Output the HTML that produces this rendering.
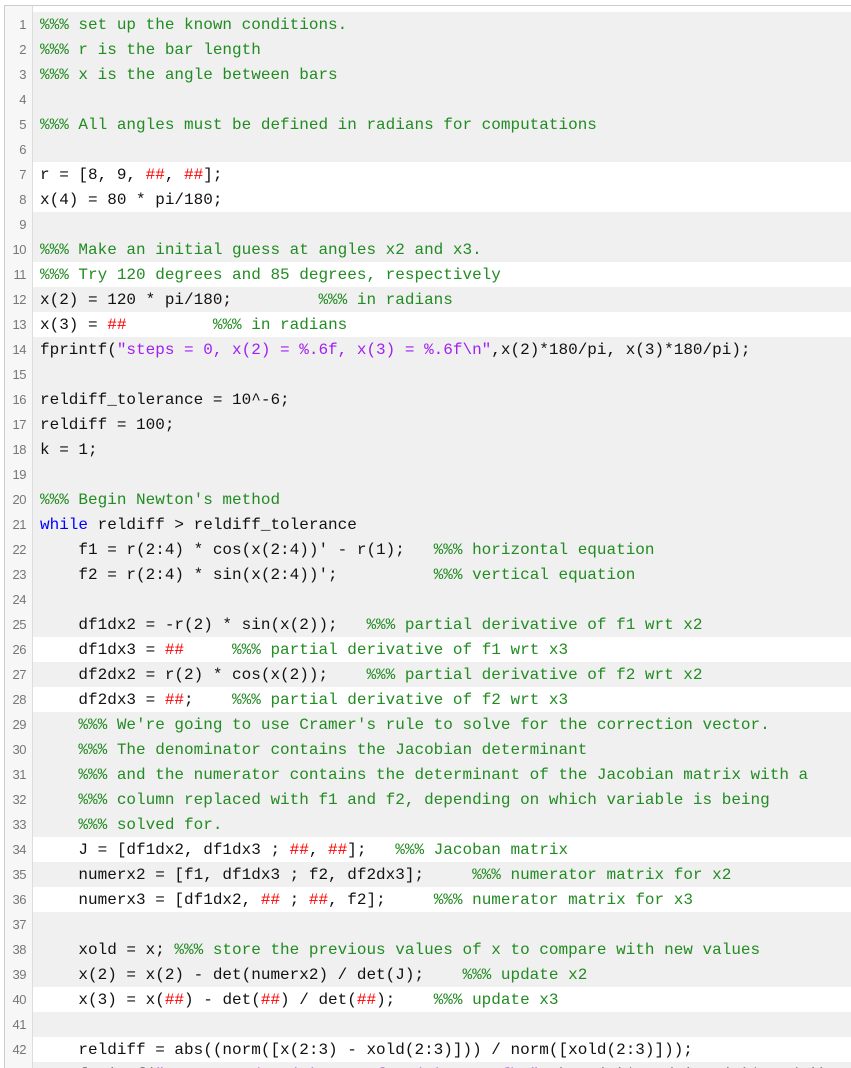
<!DOCTYPE html>
<html><head><meta charset="utf-8"><style>
html,body{margin:0;padding:0;background:#fff;width:851px;height:1068px;overflow:hidden;position:relative}
.wrap{position:absolute;left:4px;top:5px;width:847px;height:1063px;border-left:1px solid #ccc;border-top:1px solid #ccc;}
.gut{position:absolute;left:5px;top:6px;width:27px;height:1062px;background:#f7f7f7;border-right:1px solid #ddd}
.rows{position:absolute;left:0;top:12px;width:851px;height:1056px;overflow:hidden}
.r{position:relative;height:25px;line-height:26px;background:#f0f0f0;margin-left:33px;white-space:pre;font-family:"Liberation Mono",monospace;font-size:16px;color:#111;padding-left:7px}
.r.w{background:#fff}
.n{position:absolute;left:-33px;width:26px;text-align:right;font-family:"Liberation Sans",sans-serif;font-size:13px;color:#777;letter-spacing:-0.5px}
.c{color:#228b22}.k{color:#0000ff}.s{color:#a020f0}.h{color:#ff0000}
</style></head><body>
<div class="wrap"></div><div class="gut"></div>
<div class="rows">
<div class="r"><span class="n">1</span><span class="c">%%% set up the known conditions.</span></div>
<div class="r"><span class="n">2</span><span class="c">%%% r is the bar length</span></div>
<div class="r"><span class="n">3</span><span class="c">%%% x is the angle between bars</span></div>
<div class="r"><span class="n">4</span></div>
<div class="r"><span class="n">5</span><span class="c">%%% All angles must be defined in radians for computations</span></div>
<div class="r"><span class="n">6</span></div>
<div class="r w"><span class="n">7</span>r = [8, 9, <span class="h">##</span>, <span class="h">##</span>];</div>
<div class="r w"><span class="n">8</span>x(4) = 80 * pi/180;</div>
<div class="r"><span class="n">9</span></div>
<div class="r"><span class="n">10</span><span class="c">%%% Make an initial guess at angles x2 and x3.</span></div>
<div class="r w"><span class="n">11</span><span class="c">%%% Try 120 degrees and 85 degrees, respectively</span></div>
<div class="r"><span class="n">12</span>x(2) = 120 * pi/180;         <span class="c">%%% in radians</span></div>
<div class="r w"><span class="n">13</span>x(3) = <span class="h">##</span>         <span class="c">%%% in radians</span></div>
<div class="r"><span class="n">14</span>fprintf(<span class="s">"steps = 0, x(2) = %.6f, x(3) = %.6f\n"</span>,x(2)*180/pi, x(3)*180/pi);</div>
<div class="r"><span class="n">15</span></div>
<div class="r"><span class="n">16</span>reldiff_tolerance = 10^-6;</div>
<div class="r"><span class="n">17</span>reldiff = 100;</div>
<div class="r"><span class="n">18</span>k = 1;</div>
<div class="r"><span class="n">19</span></div>
<div class="r"><span class="n">20</span><span class="c">%%% Begin Newton's method</span></div>
<div class="r"><span class="n">21</span><span class="k">while</span> reldiff &gt; reldiff_tolerance</div>
<div class="r"><span class="n">22</span>    f1 = r(2:4) * cos(x(2:4))' - r(1);   <span class="c">%%% horizontal equation</span></div>
<div class="r"><span class="n">23</span>    f2 = r(2:4) * sin(x(2:4))';          <span class="c">%%% vertical equation</span></div>
<div class="r"><span class="n">24</span></div>
<div class="r"><span class="n">25</span>    df1dx2 = -r(2) * sin(x(2));   <span class="c">%%% partial derivative of f1 wrt x2</span></div>
<div class="r w"><span class="n">26</span>    df1dx3 = <span class="h">##</span>     <span class="c">%%% partial derivative of f1 wrt x3</span></div>
<div class="r"><span class="n">27</span>    df2dx2 = r(2) * cos(x(2));    <span class="c">%%% partial derivative of f2 wrt x2</span></div>
<div class="r w"><span class="n">28</span>    df2dx3 = <span class="h">##</span>;    <span class="c">%%% partial derivative of f2 wrt x3</span></div>
<div class="r"><span class="n">29</span>    <span class="c">%%% We're going to use Cramer's rule to solve for the correction vector.</span></div>
<div class="r"><span class="n">30</span>    <span class="c">%%% The denominator contains the Jacobian determinant</span></div>
<div class="r"><span class="n">31</span>    <span class="c">%%% and the numerator contains the determinant of the Jacobian matrix with a</span></div>
<div class="r"><span class="n">32</span>    <span class="c">%%% column replaced with f1 and f2, depending on which variable is being</span></div>
<div class="r"><span class="n">33</span>    <span class="c">%%% solved for.</span></div>
<div class="r w"><span class="n">34</span>    J = [df1dx2, df1dx3 ; <span class="h">##</span>, <span class="h">##</span>];   <span class="c">%%% Jacoban matrix</span></div>
<div class="r"><span class="n">35</span>    numerx2 = [f1, df1dx3 ; f2, df2dx3];     <span class="c">%%% numerator matrix for x2</span></div>
<div class="r w"><span class="n">36</span>    numerx3 = [df1dx2, <span class="h">##</span> ; <span class="h">##</span>, f2];     <span class="c">%%% numerator matrix for x3</span></div>
<div class="r"><span class="n">37</span></div>
<div class="r"><span class="n">38</span>    xold = x; <span class="c">%%% store the previous values of x to compare with new values</span></div>
<div class="r"><span class="n">39</span>    x(2) = x(2) - det(numerx2) / det(J);    <span class="c">%%% update x2</span></div>
<div class="r w"><span class="n">40</span>    x(3) = x(<span class="h">##</span>) - det(<span class="h">##</span>) / det(<span class="h">##</span>);    <span class="c">%%% update x3</span></div>
<div class="r"><span class="n">41</span></div>
<div class="r w"><span class="n">42</span>    reldiff = abs((norm([x(2:3) - xold(2:3)])) / norm([xold(2:3)]));</div>
<div class="r"><span class="n">43</span>    fprintf(<span class="s">"steps = %d, x(2) = %.6f, x(3) = %.6f\n"</span>, k, x(2)*180/pi, x(3)*180/pi);</div>
</div>
</body></html>
